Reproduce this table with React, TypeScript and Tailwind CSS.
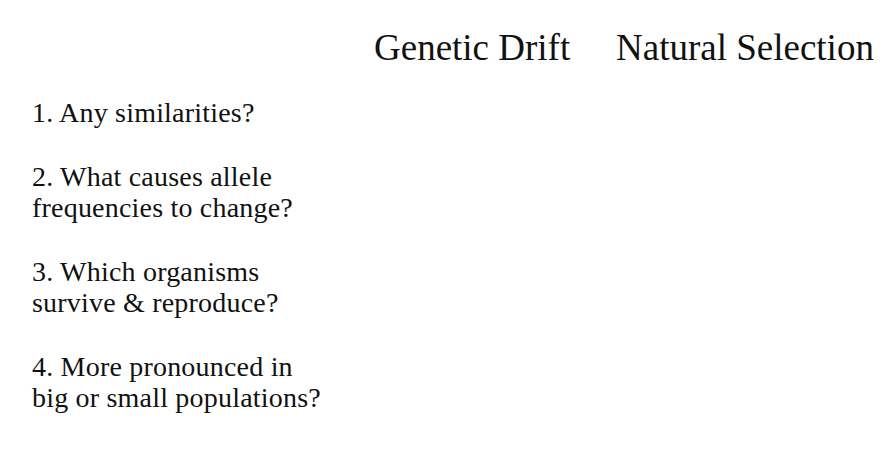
const questions = [
  ["1. Any similarities?"],
  ["2. What causes allele", "frequencies to change?"],
  ["3. Which organisms", "survive & reproduce?"],
  ["4. More pronounced in", "big or small populations?"],
];

export default function App() {
  return (
    <div className="w-[886px] h-[452px] bg-white text-[#111] font-['Liberation_Serif',serif] overflow-hidden">
      <div className="grid grid-cols-[342px_242px_1fr] pl-[32px] pt-[26px]">
        <div />
        <h2 className="text-[37px] leading-[44px] font-normal whitespace-nowrap">Genetic Drift</h2>
        <h2 className="text-[37px] leading-[44px] font-normal whitespace-nowrap">Natural Selection</h2>
      </div>
      <div className="pl-[32px] mt-[27px] flex flex-col gap-[33px]">
        {questions.map((lines, i) => (
          <p key={i} className="text-[28px] leading-[31px] tracking-[0.2px]">
            {lines.map((l, j) => (
              <span key={j} className="block whitespace-nowrap">{l}</span>
            ))}
          </p>
        ))}
      </div>
    </div>
  );
}
